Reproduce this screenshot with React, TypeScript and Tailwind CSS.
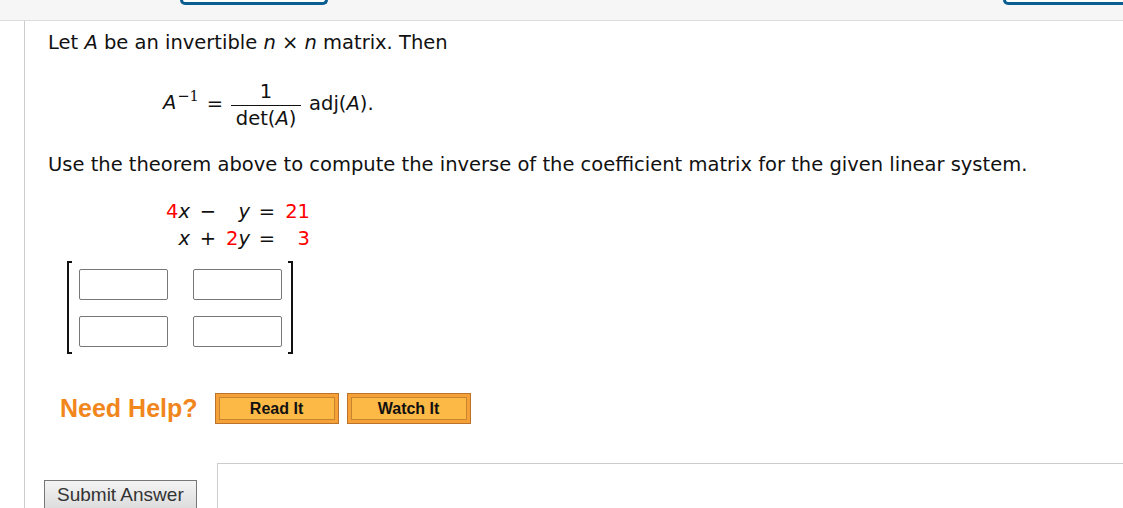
import React from 'react';

const red = 'text-[#ff0000]';

function MatrixInputs() {
  return (
    <div className="ml-[23px] mt-[9px] flex h-[93px] w-fit">
      <div className="w-[5px] border-y-2 border-l-2 border-[#111]" />
      <div className="ml-[7px] mt-[8px] grid h-fit grid-cols-[89px_89px] gap-x-[25px] gap-y-[16px]">
        {[0, 1, 2, 3].map((i) => (
          <input
            key={i}
            type="text"
            className="h-[31px] w-[89px] rounded-[2px] border border-[#777] bg-white"
          />
        ))}
      </div>
      <div className="ml-[6px] w-[5px] border-y-2 border-r-2 border-[#111]" />
    </div>
  );
}

function HelpButton({ label }: { label: string }) {
  return (
    <button className="h-[31px] w-[124px] border border-[#b9732c] bg-[#f6a038] p-[3px]">
      <span className="flex h-full w-full items-center justify-center border border-[#c8852f] bg-[#fdb945] font-['Liberation_Sans',Arial,sans-serif] text-[16px] font-bold text-[#111]">
        {label}
      </span>
    </button>
  );
}

export default function App() {
  return (
    <div className="flex h-[508px] w-[1123px] flex-col overflow-hidden bg-white font-['DejaVu_Sans',Verdana,sans-serif] text-[19.5px] text-[#111]">
      {/* top strip */}
      <div className="flex h-[21px] shrink-0 overflow-hidden border-b border-[#dddddd] bg-[#f6f6f6]">
        <div className="ml-[180px] h-[5px] w-[148px] rounded-b-[6px] border-x-[3px] border-b-[3px] border-[#0b5e92] bg-white" />
        <div className="ml-auto h-[5px] w-[130px] shrink-0 translate-x-[10px] rounded-b-[6px] border-x-[3px] border-b-[3px] border-[#0b5e92] bg-white" />
      </div>

      <div className="flex flex-1">
        <div className="w-[25px] shrink-0 border-r border-[#cccccc]" />

        <div className="flex flex-1 flex-col pl-[19px]">
          <p className="ml-[4px] mt-[9px] leading-[26px]">
            Let <i>A</i> be an invertible <i>n</i> × <i>n</i> matrix. Then
          </p>

          <div className="ml-[119px] mt-[26px] flex items-center leading-[20px]">
            <span className="mb-[4px]">
              <i>A</i>
              <span className="relative -top-[8px] ml-[1px] text-[14.5px]">
                −<span className="font-['DejaVu_Serif',serif]">1</span>
              </span>
            </span>
            <span className="mb-[4px] ml-[8px]">=</span>
            <div className="ml-[8px] flex w-[70px] flex-col items-center">
              <span className="pb-[3px] leading-[20px]">1</span>
              <span className="h-px w-full bg-[#111]" />
              <span className="pt-[3px] leading-[20px]">
                det(<i>A</i>)
              </span>
            </div>
            <span className="mb-[4px] ml-[8px]">
              adj(<i>A</i>).
            </span>
          </div>

          <p className="ml-[4px] mt-[23px] leading-[26px]">
            Use the theorem above to compute the inverse of the coefficient matrix for the given linear system.
          </p>

          <div className="ml-[116px] mt-[20px] grid grid-cols-[30px_36px_24px_34px_26px] leading-[27px]">
            <span className="text-right">
              <span className={red}>4</span>
              <i>x</i>
            </span>
            <span className="text-center">−</span>
            <span className="text-right">
              <i>y</i>
            </span>
            <span className="text-center">=</span>
            <span className={`text-right ${red}`}>21</span>

            <span className="text-right">
              <i>x</i>
            </span>
            <span className="text-center">+</span>
            <span className="text-right">
              <span className={red}>2</span>
              <i>y</i>
            </span>
            <span className="text-center">=</span>
            <span className={`text-right ${red}`}>3</span>
          </div>

          <MatrixInputs />

          <div className="ml-[16px] mt-[39px] flex h-[31px] items-center">
            <span className="font-['Liberation_Sans',Arial,sans-serif] text-[25px] font-bold leading-[31px] text-[#f0861c]">
              Need Help?
            </span>
            <div className="ml-[17px] flex gap-[8px]">
              <HelpButton label="Read It" />
              <HelpButton label="Watch It" />
            </div>
          </div>

          <div className="mt-[39px] flex flex-1">
            <button className="mt-[17px] h-[30px] w-[153px] self-start border border-[#777] bg-gradient-to-b from-[#f4f4f4] to-[#dcdcdc] pl-[12px] text-left font-['Liberation_Sans',Arial,sans-serif] text-[19px] leading-[28px] text-[#333]">
              Submit Answer
            </button>
            <div className="ml-[20px] flex-1 border-l border-t border-[#cccccc]" />
          </div>
        </div>
      </div>
    </div>
  );
}
